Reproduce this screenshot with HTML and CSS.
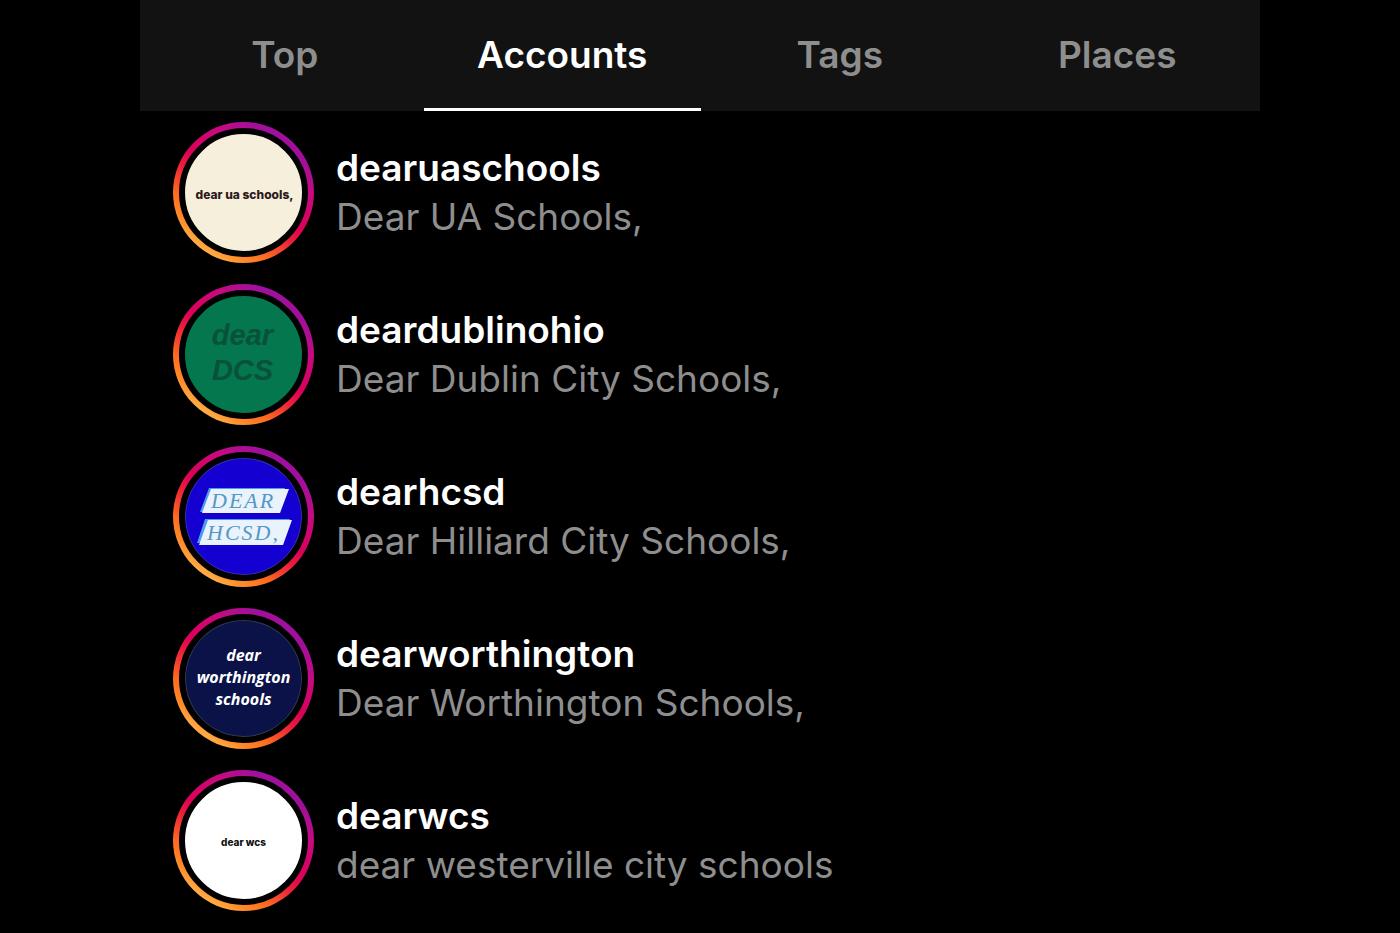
FILE: index.html
```html
<!DOCTYPE html>
<html lang="en">
<head>
    <meta charset="UTF-8">
    <title>Search</title>
    <meta name="viewport" content="width=device-width, initial-scale=1.0">
    <link rel="stylesheet" href="styles.css">
</head>
<body>
    <div class="app">
        <nav class="tabs">
            <a class="tab" href="#top">Top</a>
            <a class="tab active" href="#accounts" aria-current="page">Accounts</a>
            <a class="tab" href="#tags">Tags</a>
            <a class="tab" href="#places">Places</a>
        </nav>
        <main>
            <ul class="accounts">
                <li>
                    <a class="account" href="#dearuaschools">
                        <span class="ring"><span class="avatar ua">dear ua schools,</span></span>
                        <span class="info">
                            <span class="username">dearuaschools</span>
                            <span class="fullname">Dear UA Schools,</span>
                        </span>
                    </a>
                </li>
                <li>
                    <a class="account" href="#deardublinohio">
                        <span class="ring"><span class="avatar dublin">dear<br>DCS</span></span>
                        <span class="info">
                            <span class="username">deardublinohio</span>
                            <span class="fullname">Dear Dublin City Schools,</span>
                        </span>
                    </a>
                </li>
                <li>
                    <a class="account" href="#dearhcsd">
                        <span class="ring">
                            <span class="avatar hcsd">
                                <svg viewBox="0 0 117 117">
                                    <polygon class="shade" points="24,30 100,30 91,54 15,54"/>
                                    <polygon class="plate" points="26,31 104,31 95,55 17,55"/>
                                    <text x="26" y="50">DEAR</text>
                                    <polygon class="shade" points="20,61 105,61 96,85 12,85"/>
                                    <polygon class="plate" points="23,62 107,62 98,87 14,87"/>
                                    <text x="22" y="82">HCSD,</text>
                                </svg>
                            </span>
                        </span>
                        <span class="info">
                            <span class="username">dearhcsd</span>
                            <span class="fullname">Dear Hilliard City Schools,</span>
                        </span>
                    </a>
                </li>
                <li>
                    <a class="account" href="#dearworthington">
                        <span class="ring"><span class="avatar worthington">dear<br>worthington<br>schools</span></span>
                        <span class="info">
                            <span class="username">dearworthington</span>
                            <span class="fullname">Dear Worthington Schools,</span>
                        </span>
                    </a>
                </li>
                <li>
                    <a class="account" href="#dearwcs">
                        <span class="ring"><span class="avatar wcs">dear wcs</span></span>
                        <span class="info">
                            <span class="username">dearwcs</span>
                            <span class="fullname">dear westerville city schools</span>
                        </span>
                    </a>
                </li>
            </ul>
        </main>
    </div>
</body>
</html>
```
FILE: styles.css
```css
* {
    box-sizing: border-box;
}
body {
    margin: 0;
    background-color: #000;
    color: #fff;
    font-family: Inter, "Liberation Sans", sans-serif;
}
a {
    color: inherit;
    text-decoration: none;
}
.app {
    width: 80%;
    margin: 0 auto;
}
/* tabs */
.tabs {
    display: flex;
    padding: 0 4px 0 6px;
    background-color: #121212;
}
.tab {
    flex: 1;
    padding: 30px 0 29px;
    border-bottom: 3px solid transparent;
    color: #8e8e8e;
    font-size: 37px;
    font-weight: 600;
    line-height: 49px;
    text-align: center;
}
.tab.active {
    border-bottom-color: #fff;
    color: #fff;
}
/* accounts */
.accounts {
    margin: 0;
    padding: 0;
    list-style: none;
}
.account {
    display: flex;
    align-items: center;
    gap: 22px;
    padding: 11px 33px 10px;
}
.ring {
    flex: none;
    width: 141px;
    height: 141px;
    padding: 6px;
    border-radius: 50%;
    background: linear-gradient(215deg, #a0109c 18%, #c80a80 31%, #dc0058 48%, #ea1c3c 56%, #ff6a20 70%, #ff8c2a 79%, #ffb048 86%);
}
.avatar {
    display: flex;
    align-items: center;
    justify-content: center;
    width: 129px;
    height: 129px;
    border: 6px solid #000;
    border-radius: 50%;
    text-align: center;
    white-space: nowrap;
}
.ua {
    padding: 4px 0 0 2px;
    background-color: #f5efdc;
    color: #2c1a1a;
    font-size: 12px;
    font-weight: 800;
}
.dublin {
    padding: 0 2px 4px 0;
    background-color: #04774e;
    color: #08513a;
    font-family: "Liberation Sans", sans-serif;
    font-size: 29px;
    font-style: italic;
    font-weight: bold;
    line-height: 35px;
}
.hcsd {
    background-color: #1500d2;
    box-shadow: inset 0 0 0 1px #3a2f9c;
}
.hcsd svg {
    width: 117px;
    height: 117px;
}
.hcsd .shade {
    fill: #4a9cf0;
}
.hcsd .plate {
    fill: #eaf3fb;
}
.hcsd text {
    fill: #5598c4;
    font-family: "Liberation Serif", serif;
    font-size: 22px;
    font-style: italic;
    letter-spacing: 2px;
}
.worthington {
    padding-bottom: 4px;
    background-color: #0a1247;
    box-shadow: inset 0 0 0 1px #333a4c;
    font-family: "Open Sans", sans-serif;
    font-size: 16px;
    font-style: italic;
    font-weight: bold;
    line-height: 22px;
}
.wcs {
    padding-top: 2px;
    background-color: #fff;
    color: #111;
    font-size: 10px;
    font-weight: 800;
}
.info {
    display: flex;
    flex-direction: column;
    padding-bottom: 2px;
    font-size: 37px;
    line-height: 49px;
}
.username {
    font-weight: 600;
}
.fullname {
    color: #8e8e8e;
}
```
